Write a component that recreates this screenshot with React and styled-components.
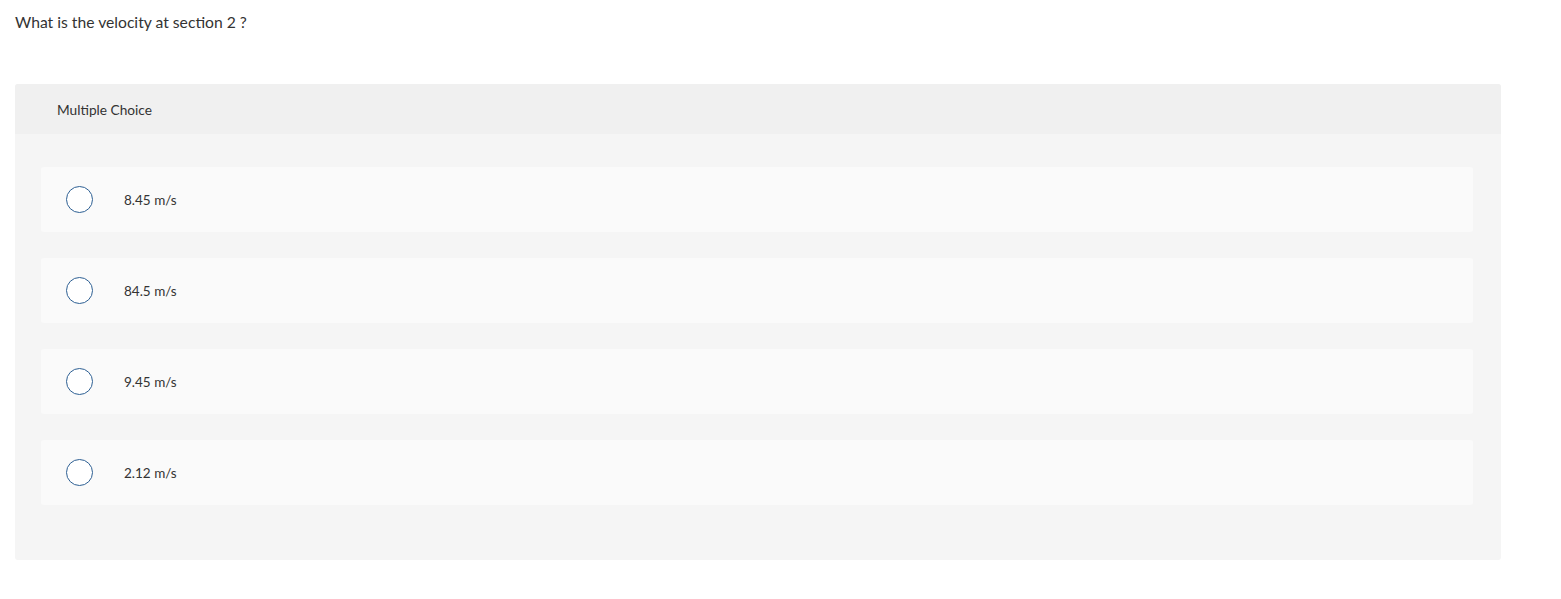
import React from 'react'
import styled, { createGlobalStyle } from 'styled-components'

const Global = createGlobalStyle`
  body {
    margin: 0;
    background: #ffffff;
    font-family: Lato, "Open Sans", sans-serif;
    color: #333333;
  }
`

const Page = styled.div`
  padding: 12px 60px 40px 15px;
`

const Question = styled.p`
  margin: 0 0 52px 0;
  font-size: 15.7px;
  line-height: 20px;
  color: #333333;
`

const Panel = styled.section`
  width: 1486px;
  background: #f5f5f5;
  border-radius: 3px;
  overflow: hidden;
`

const PanelHeader = styled.div`
  height: 50px;
  background: #f0f0f0;
  display: flex;
  align-items: center;
  padding-left: 42px;
  font-size: 13.7px;
  color: #333333;
`

const Choices = styled.ul`
  list-style: none;
  margin: 0;
  padding: 33px 28px 55px 26px;
  display: flex;
  flex-direction: column;
  gap: 26px;
`

const Choice = styled.li`
  height: 65px;
  background: #fafafa;
  border-radius: 3px;
  display: flex;
  align-items: center;
  padding-left: 25px;
`

const Radio = styled.span`
  width: 25px;
  height: 25px;
  border-radius: 50%;
  border: 1.5px solid #2d5f93;
  background: #ffffff;
  flex-shrink: 0;
`

const Label = styled.span`
  margin-left: 31px;
  font-size: 13.5px;
  color: #333333;
`

const answers = ['8.45 m/s', '84.5 m/s', '9.45 m/s', '2.12 m/s']

export default function App() {
  return (
    <>
      <Global />
      <Page>
        <Question>What is the velocity at section 2 ?</Question>
        <Panel>
          <PanelHeader>Multiple Choice</PanelHeader>
          <Choices>
            {answers.map((a) => (
              <Choice key={a}>
                <Radio />
                <Label>{a}</Label>
              </Choice>
            ))}
          </Choices>
        </Panel>
      </Page>
    </>
  )
}
